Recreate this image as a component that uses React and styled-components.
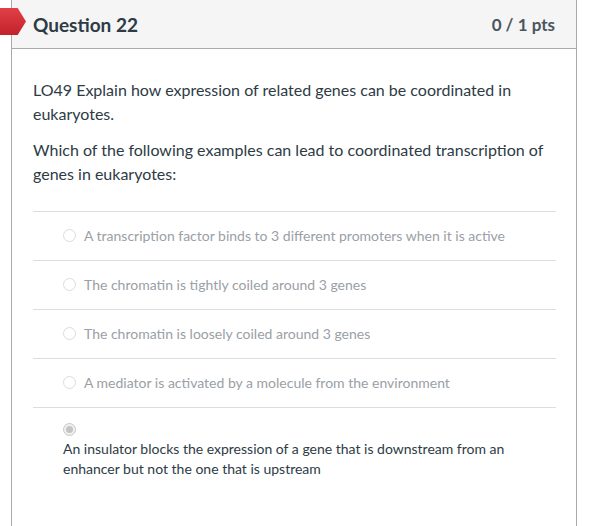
import React from "react";
import styled, { createGlobalStyle } from "styled-components";

const Global = createGlobalStyle`
  html, body { margin: 0; padding: 0; background: #fff; }
  body { font-family: Lato, "Open Sans", sans-serif; color: #2d3b45; }
`;

const Page = styled.div`
  position: relative;
  padding-left: 11px;
  width: 566px;
`;

const Flag = styled.div`
  position: absolute;
  left: 0;
  top: 8px;
  width: 26px;
  height: 27px;
  background: linear-gradient(#e04048, #c4222a);
  clip-path: polygon(0 0, 68% 0, 100% 50%, 68% 100%, 0 100%);
`;

const Card = styled.div`
  border-left: 1px solid #aaa;
  border-right: 1px solid #aaa;
  min-height: 526px;
  box-sizing: border-box;
`;

const Header = styled.div`
  height: 48px;
  background: #f5f5f5;
  border-bottom: 1px solid #aaa;
  display: flex;
  align-items: center;
  justify-content: space-between;
  padding: 0 21px 0 21px;
`;

const Title = styled.div`
  font-size: 19px;
  font-weight: 700;
  color: #2d3b45;
`;

const Points = styled.div`
  font-size: 17px;
  font-weight: 700;
  color: #4a5560;
`;

const Body = styled.div`
  padding: 29px 20px 0 21px;
`;

const Para = styled.p`
  margin: 0 0 12px;
  font-size: 16px;
  line-height: 24px;
`;

const Answers = styled.div`
  margin-top: 25px;
`;

const Row = styled.div`
  border-top: 1px solid #ddd;
  height: 47px;
  padding-bottom: 1px;
  display: flex;
  align-items: center;
  padding-left: 30px;
  gap: 8px;
  font-size: 14px;
  color: #9aa0a6;
`;

const SelectedRow = styled.div`
  border-top: 1px solid #ddd;
  padding: 15px 0 0 30px;
  font-size: 14px;
  line-height: 20px;
  color: #2d3b45;
`;

const Radio = styled.span`
  display: inline-block;
  width: 13px;
  height: 13px;
  border-radius: 50%;
  border: 1px solid ${(p) => (p.$checked ? "#c8c8c8" : "#dcdcdc")};
  background: ${(p) => (p.$checked ? "#f0f0f0" : "#fff")};
  box-sizing: border-box;
  position: relative;
  flex: none;
  &::after {
    content: "";
    display: ${(p) => (p.$checked ? "block" : "none")};
    position: absolute;
    left: 2px;
    top: 2px;
    width: 7px;
    height: 7px;
    border-radius: 50%;
    background: #c4c4c4;
  }
`;

const SelectedRadio = styled(Radio)`
  display: block;
  margin-bottom: 3px;
`;

const answers = [
  "A transcription factor binds to 3 different promoters when it is active",
  "The chromatin is tightly coiled around 3 genes",
  "The chromatin is loosely coiled around 3 genes",
  "A mediator is activated by a molecule from the environment",
];

export default function App() {
  return (
    <>
      <Global />
      <Page>
        <Flag />
        <Card>
          <Header>
            <Title>Question 22</Title>
            <Points>0 / 1 pts</Points>
          </Header>
          <Body>
            <Para>LO49 Explain how expression of related genes can be coordinated in eukaryotes.</Para>
            <Para>Which of the following examples can lead to coordinated transcription of genes in eukaryotes:</Para>
            <Answers>
              {answers.map((a) => (
                <Row key={a}>
                  <Radio />
                  <span>{a}</span>
                </Row>
              ))}
              <SelectedRow>
                <SelectedRadio $checked />
                An insulator blocks the expression of a gene that is downstream from an enhancer but not the one that is upstream
              </SelectedRow>
            </Answers>
          </Body>
        </Card>
      </Page>
    </>
  );
}
